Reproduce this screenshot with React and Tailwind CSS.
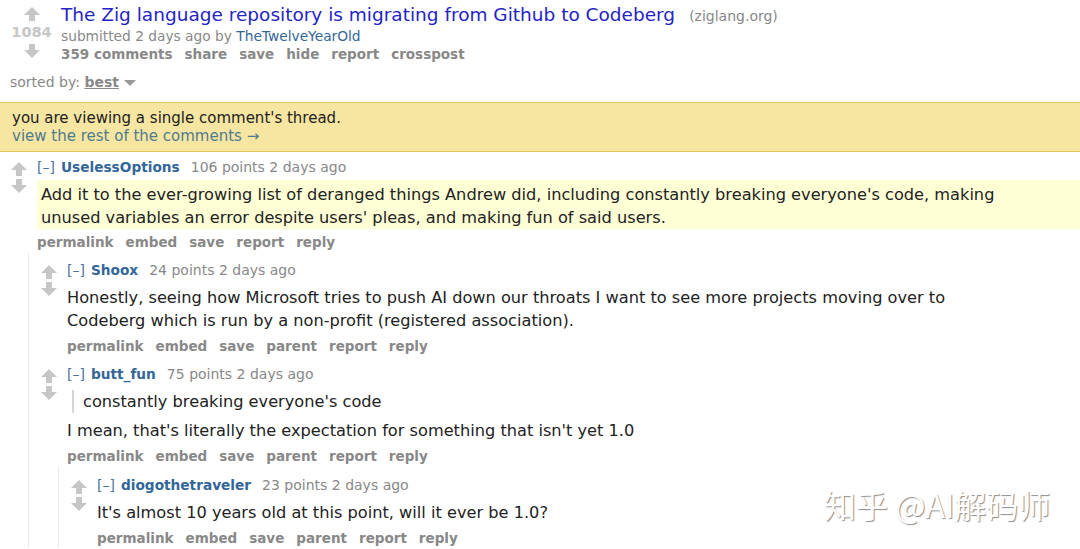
import React from 'react';

const FONT = { fontFamily: '"DejaVu Sans", Verdana, sans-serif' };

function Arrow({ down = false, className = '' }) {
  return (
    <svg width="18" height="14" viewBox="0 0 18 14" className={className}>
      {down ? (
        <path d="M6 0h6v6h5L9 14 1 6h5z" fill="#c6c6c6" />
      ) : (
        <path d="M9 0l8 8h-5v6H6V8H1z" fill="#c6c6c6" />
      )}
    </svg>
  );
}

function Buttons({ items, className = 'leading-[20px]' }) {
  return (
    <div className={'flex gap-[12px] text-[13.5px] font-bold text-[#888] whitespace-nowrap ' + className}>
      {items.map((b) => (
        <span key={b}>{b}</span>
      ))}
    </div>
  );
}

function Comment({ author, points, highlight, quote, body, buttons, children, top = 'pt-[9px]' }) {
  return (
    <div className={top}>
      <div className="flex">
        <div className="w-[27px] shrink-0 flex flex-col pt-[5px]">
          <Arrow />
          <Arrow down className="mt-[3px]" />
        </div>
        <div className="flex-1 min-w-0">
          <div className="flex text-[14px] leading-[20px] text-[#888] whitespace-nowrap">
            <span className="text-[#4d7299]">[–]</span>
            <span className="ml-[6px] font-bold text-[#369] text-[13.7px]">{author}</span>
            <span className="ml-[11px]">{points} points 2 days ago</span>
          </div>
          {highlight ? (
            <div className="mt-[3px] bg-[#ffffd6] pl-[4px] pt-[3px] text-[16.2px] leading-[23px] text-[#222]">
              {body}
            </div>
          ) : (
            <div className="mt-[6px] text-[16.2px] leading-[23px] text-[#222]">
              {quote && (
                <div className="flex mb-[6px] -ml-[1px]">
                  <div className="w-[2px] bg-[#d6d6d6] ml-[6px] mr-[9px]" />
                  <div>{quote}</div>
                </div>
              )}
              {body.map((l, i) => (
                <div key={i}>{l}</div>
              ))}
            </div>
          )}
          <div className={highlight ? 'mt-[3px]' : 'mt-[4px]'}>
            <Buttons items={buttons} />
          </div>
        </div>
      </div>
      {children && (
        <div className="ml-[18px] border-l border-[#ececec] pl-[11px]">{children}</div>
      )}
    </div>
  );
}

export default function App() {
  return (
    <div className="relative w-[1080px] h-[549px] overflow-hidden bg-white" style={FONT}>
      {/* post */}
      <div className="flex pt-[3px]">
        <div className="w-[61px] shrink-0 flex flex-col items-center pt-[4px] pl-[2px]">
          <Arrow />
          <div className="text-[14.5px] leading-[20px] font-bold text-[#c6c6c6] mt-[1px]">1084</div>
          <Arrow down className="mt-[2px]" />
        </div>
        <div className="flex-1">
          <div className="h-[24px] leading-[24px] whitespace-nowrap">
            <span className="text-[18.5px] text-[#2424c6]">
              The Zig language repository is migrating from Github to Codeberg
            </span>
            <span className="text-[14px] text-[#888] ml-[14px]">(ziglang.org)</span>
          </div>
          <div className="text-[13.75px] leading-[18px] text-[#888]">
            submitted 2 days ago by <span className="text-[#369]">TheTwelveYearOld</span>
          </div>
          <Buttons
            items={['359 comments', 'share', 'save', 'hide', 'report', 'crosspost']}
            className="leading-[18px]"
          />
        </div>
      </div>

      <div className="pl-[10px] mt-[9px] text-[14px] leading-[20px] text-[#888] flex items-center">
        sorted by:&nbsp;<span className="font-bold text-[#888] underline">best</span>
        <svg width="12" height="8" viewBox="0 0 12 8" className="ml-[5px] mt-[1px]">
          <path d="M0 1h12L6 7z" fill="#999" />
        </svg>
      </div>

      <div className="mt-[10px] bg-[#f7e6a2] border-y border-[#e3c35f] pl-[12px] py-[6px] text-[15px] leading-[18px]">
        <div className="text-[#222]">you are viewing a single comment's thread.</div>
        <div className="text-[#4f7b8e]">view the rest of the comments →</div>
      </div>

      <div className="pl-[10px] pt-[5px]">
        <Comment
          top=""
          author="UselessOptions"
          points="106"
          highlight
          body={
            <>
              Add it to the ever-growing list of deranged things Andrew did, including constantly breaking everyone's code, making
              <br />
              unused variables an error despite users' pleas, and making fun of said users.
            </>
          }
          buttons={['permalink', 'embed', 'save', 'report', 'reply']}
        >
          <Comment
            top="pt-[8px]"
            author="Shoox"
            points="24"
            body={[
              'Honestly, seeing how Microsoft tries to push AI down our throats I want to see more projects moving over to',
              'Codeberg which is run by a non-profit (registered association).',
            ]}
            buttons={['permalink', 'embed', 'save', 'parent', 'report', 'reply']}
          />
          <Comment
            top="pt-[8px]"
            author="butt_fun"
            points="75"
            quote="constantly breaking everyone's code"
            body={["I mean, that's literally the expectation for something that isn't yet 1.0"]}
            buttons={['permalink', 'embed', 'save', 'parent', 'report', 'reply']}
          >
            <Comment
              author="diogothetraveler"
              points="23"
              body={["It's almost 10 years old at this point, will it ever be 1.0?"]}
              buttons={['permalink', 'embed', 'save', 'parent', 'report', 'reply']}
            />
          </Comment>
        </Comment>
      </div>

      <div
        className="absolute left-[824px] top-[484px] text-[32px] leading-[40px] text-white whitespace-nowrap [text-shadow:1px_1px_1px_rgba(0,0,0,0.45)]"
        style={{ fontFamily: '"Noto Sans CJK SC", "DejaVu Sans", sans-serif' }}
      >
        知乎 @AI解码师
      </div>
    </div>
  );
}
